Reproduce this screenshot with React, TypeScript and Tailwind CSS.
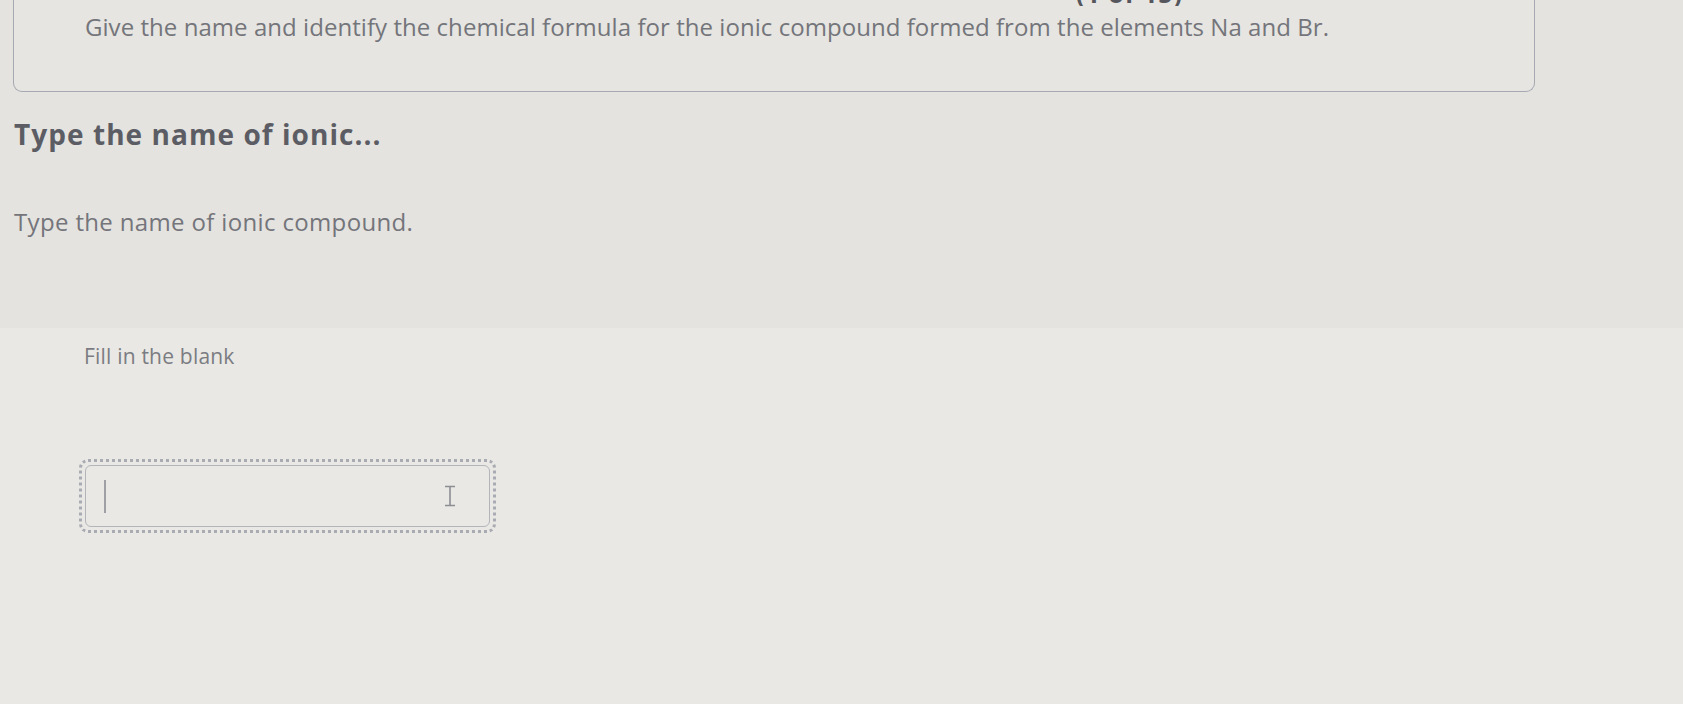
import React from 'react';

const IBeam: React.FC = () => (
  <svg width="14" height="22" viewBox="0 0 14 22" fill="none" stroke="#8d8e93" strokeWidth="1.6">
    <path d="M2 1.5h10M2 20.5h10M7 1.5v19" />
  </svg>
);

function App() {
  return (
    <div className="h-[704px] w-full bg-[#e4e3df] font-['Open_Sans','Lato',sans-serif] text-[#74757b] overflow-hidden flex flex-col">
      {/* Question prompt card, top cut off by the viewport */}
      <div className="ml-[13px] w-[1522px] h-[92px] shrink-0 border-x border-b border-[#a6a8b2] rounded-b-[9px] bg-[#e6e5e1] flex flex-col">
        <div className="h-[6px] overflow-hidden flex items-end pl-[1062px]">
          <span className="font-bold text-[25px] leading-none tracking-[1px] text-[#55565e]">(1 of 15)</span>
        </div>
        <p className="pl-[71px] pt-[6px] text-[24px] leading-[30px] tracking-[0.05px]">
          Give the name and identify the chemical formula for the ionic compound formed from the elements Na and Br.
        </p>
      </div>

      <div className="pl-[14px] shrink-0">
        <h2 className="pt-[24px] text-[28px] leading-[36px] font-bold tracking-[1.05px] text-[#5c5d64]">Type the name of ionic...</h2>
        <p className="pt-[55px] text-[24px] leading-[30px] tracking-[0.35px]">Type the name of ionic compound.</p>
      </div>

      {/* Answer area */}
      <div className="mt-[91px] bg-[#e9e8e4] flex-1 pt-[14px]">
        <p className="pl-[84px] text-[21px] leading-[28px] tracking-[0.2px] text-[#7b7c82]">Fill in the blank</p>
        <div className="ml-[79px] mt-[89px] w-[417px] h-[74px] rounded-[9px] border-[3px] border-dotted border-[#a9abb2] p-[3px]">
          <div className="h-full rounded-[6px] border border-[#b3b5bb] flex items-center pl-[18px] pr-[32px] justify-between">
            <div className="w-[2px] h-[33px] bg-[#9fa0a5]" />
            <IBeam />
          </div>
        </div>
      </div>
    </div>
  );
}

export default App;
